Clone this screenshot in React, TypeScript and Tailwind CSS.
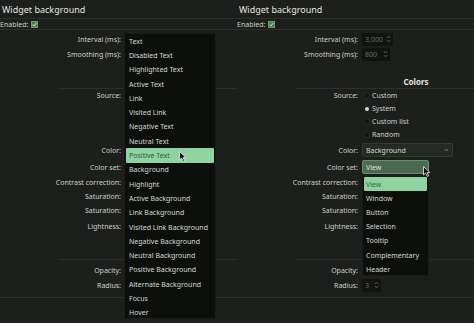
import React from "react";

const Cursor = () => (
  <svg width="8" height="11" viewBox="0 0 8 11">
    <path d="M0.5 0.5 L0.5 9 L2.6 7.1 L4.2 10.4 L5.6 9.8 L4.1 6.6 L6.9 6.6 Z" fill="#111" stroke="#eee" strokeWidth="0.8" />
  </svg>
);

const SpinArrows = () => (
  <svg width="5" height="8" viewBox="0 0 5 8">
    <path d="M0.8 3 L2.5 1.2 L4.2 3 M0.8 5 L2.5 6.8 L4.2 5" fill="none" stroke="#6d706c" strokeWidth="0.8" />
  </svg>
);

const Spin = ({ value, w }: { value: string; w: string }) => (
  <div className={`${w} h-[13px] bg-[#121411] flex items-center justify-between pl-[3px] pr-[2px] text-[#6a6d69]`}>
    <span>{value}</span>
    <SpinArrows />
  </div>
);

const Row = ({ label, h, children, cls = "" }: { label: string; h: string; children?: React.ReactNode; cls?: string }) => (
  <div className={`flex items-center ${h} ${cls}`}>
    <div className="w-[121px] text-right shrink-0">{label}</div>
    <div className="pl-[4px] flex items-center">{children}</div>
  </div>
);

const Radio = ({ label, checked }: { label: string; checked?: boolean }) => (
  <div className="flex items-center gap-[2px] h-[13px]">
    <div className="w-[7px] h-[7px] rounded-full bg-[#141613] border border-[#2a2d29] flex items-center justify-center">
      {checked && <div className="w-[4px] h-[4px] rounded-full bg-[#d8dad6]" />}
    </div>
    <span>{label}</span>
  </div>
);

const Panel = ({ right }: { right?: boolean }) => {
  const colorList = [
    "Text", "Disabled Text", "Highlighted Text", "Active Text", "Link", "Visited Link",
    "Negative Text", "Neutral Text", "Positive Text", "Background", "Highlight",
    "Active Background", "Link Background", "Visited Link Background", "Negative Background",
    "Neutral Background", "Positive Background", "Alternate Background", "Focus", "Hover",
  ];
  const setList = ["View", "Window", "Button", "Selection", "Tooltip", "Complementary", "Header"];
  return (
    <div className="relative w-[237px] h-[323px] bg-[#1d1f1c] text-[7px] text-[#cdcfcb] leading-none overflow-hidden">
      <div className="h-[19px] flex items-center pl-[2px] text-[9px] text-[#e2e4e0] border-b border-[#2c2f2b]">Widget background</div>
      <div className="h-[11px] flex items-center gap-[3px] border-b border-[#2c2f2b]">
        <span>Enabled:</span>
        <div className="w-[7px] h-[7px] bg-[#4f7a56] border border-[#6d9a74] flex items-center justify-center">
          <svg width="5" height="5" viewBox="0 0 5 5"><path d="M0.6 2.6 L2 3.9 L4.4 1" fill="none" stroke="#e8f0e8" strokeWidth="0.9" /></svg>
        </div>
      </div>
      <Row label="Interval (ms):" h="h-[14px]" cls="mt-[2px]">{right && <Spin value="3,000" w="w-[31px]" />}</Row>
      <Row label="Smoothing (ms):" h="h-[14px]" cls="mt-[1px]">{right && <Spin value="800" w="w-[28px]" />}</Row>
      <div className="flex h-[14px] items-center mt-[14px] border-b border-[#2c2f2b] ml-[58px]">
        <div className="w-[63px]" />
        <div className="flex-1 text-center text-[8px] font-bold text-[#e2e4e0]">{right ? "Colors" : ""}</div>
      </div>
      <div className="flex h-[52px]">
        <div className="w-[121px] text-right h-[13px] flex items-center justify-end">Source:</div>
        {right && (
          <div className="pl-[5px] flex flex-col">
            <Radio label="Custom" />
            <Radio label="System" checked />
            <Radio label="Custom list" />
            <Radio label="Random" />
          </div>
        )}
      </div>
      <Row label="Color:" h="h-[14px]" cls="mt-[2px]">
        {right && (
          <div className="w-[91px] h-[14px] bg-[#262925] border border-[#363935] rounded-[2px] flex items-center justify-between pl-[3px] pr-[3px] text-[#d4d6d2]">
            <span>Background</span>
            <svg width="5" height="4" viewBox="0 0 5 4"><path d="M0.8 1 L2.5 2.8 L4.2 1" fill="none" stroke="#9a9d99" strokeWidth="0.8" /></svg>
          </div>
        )}
      </Row>
      <Row label="Color set:" h="h-[14px]" cls="mt-[3px]">
        {right && (
          <div className="w-[67px] h-[14px] bg-[#4b6a50] border-[#6a8c70] border rounded-[2px] flex items-center pl-[3px] text-[#e0e2de]">
            <span>View</span>
          </div>
        )}
      </Row>
      <Row label="Contrast correction:" h="h-[14px]" cls="mt-[1px]" />
      <Row label="Saturation:" h="h-[14px]" />
      <Row label="Saturation:" h="h-[14px]" />
      <Row label="Lightness:" h="h-[14px]" cls="mt-[2px]" />
      <div className="mt-[26px] ml-[58px] border-b border-[#2c2f2b]" />
      <Row label="Opacity:" h="h-[14px]" cls="mt-[3px]" />
      <Row label="Radius:" h="h-[14px]" cls="mt-[1px]">{right && <Spin value="3" w="w-[19px]" />}</Row>
      <div className="mt-[5px] border-b border-[#2c2f2b]" />

      {!right && (
        <div className="absolute left-[124px] top-[33px] w-[92px] h-[286px] bg-[#0d0f0c] border border-[#1a1c19] text-[#d6d8d4]">
          {colorList.map((c) => (
            <div
              key={c}
              className={`h-[14.3px] mx-[1px] flex items-center pl-[3px] rounded-[1px] ${c === "Positive Text" ? "bg-[#8fd3a1] text-[#2f5a3a]" : ""}`}
            >
              {c}
            </div>
          ))}
          <div className="absolute left-[54px] top-[117px]"><Cursor /></div>
        </div>
      )}
      {right && (
        <>
          <div className="absolute left-[125px] top-[176px] w-[67px] h-[100px] bg-[#0d0f0c] border border-[#1a1c19] text-[#d6d8d4]">
            {setList.map((c) => (
              <div
                key={c}
                className={`h-[14.2px] mx-[1px] flex items-center pl-[2px] rounded-[1px] ${c === "View" ? "bg-[#8fd3a1] text-[#2f6a3e]" : ""}`}
              >
                {c}
              </div>
            ))}
          </div>
          <div className="absolute left-[186px] top-[166px]"><Cursor /></div>
        </>
      )}
    </div>
  );
};

export default function App() {
  return (
    <div className="flex w-[474px] h-[323px] bg-[#1d1f1c] font-['Noto_Sans',sans-serif]">
      <Panel />
      <Panel right />
    </div>
  );
}
